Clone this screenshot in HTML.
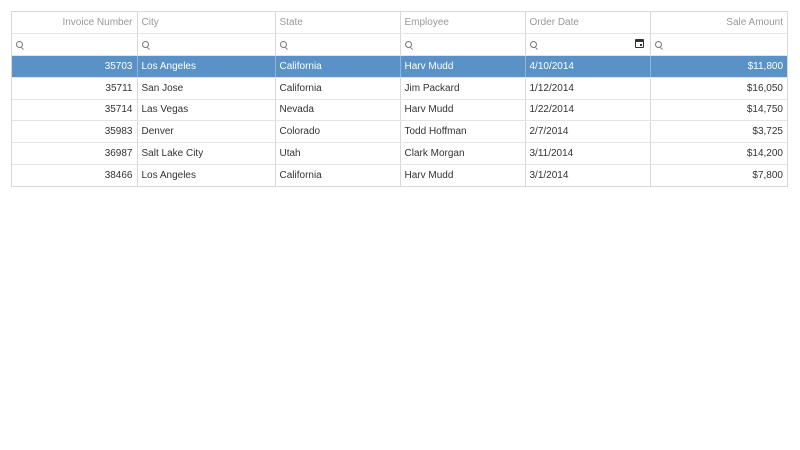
<!DOCTYPE html>
<html><head><style>
body{margin:0;background:#fff;font-family:"Segoe UI","Liberation Sans",sans-serif;font-size:10px;color:#333}
.g{position:absolute;left:11px;top:11px;width:777px;border:1px solid #d8d8d8;box-sizing:border-box}
table{border-collapse:collapse;width:100%;table-layout:fixed}
td{border-left:1px solid #d8d8d8;border-bottom:1px solid #e4e4e4;padding:0 4px;white-space:nowrap;overflow:hidden;height:20.8px}
td:first-child{border-left:none}
tr.h td{color:#999;height:21px}
tr.f td{height:21px;position:relative}
tr:last-child td{border-bottom:none}
.r{text-align:right}
tr.s td{background:#5a91c6;color:#fff;border-left-color:#8fb5db}
.m{display:inline-block;width:5px;height:5px;border:1px solid #777;border-radius:50%;position:relative;vertical-align:middle}
.m:after{content:"";position:absolute;width:3px;height:1px;background:#777;left:4px;top:6px;transform:rotate(45deg)}
.c{position:absolute;right:6px;top:5px;width:9px;height:9px;background:#333;border-radius:1px}
.c:after{content:"";position:absolute;left:1px;top:3px;width:7px;height:5px;background:#fff}
.c:before{content:"";position:absolute;left:5px;top:5px;width:2px;height:2px;background:#333;z-index:1}
</style></head><body>
<div class="g"><table>
<colgroup><col style="width:125px"><col style="width:138px"><col style="width:125px"><col style="width:125px"><col style="width:125px"><col></colgroup>
<tr class="h"><td class="r">Invoice Number</td><td>City</td><td>State</td><td>Employee</td><td>Order Date</td><td class="r">Sale Amount</td></tr>
<tr class="f"><td><span class="m"></span></td><td><span class="m"></span></td><td><span class="m"></span></td><td><span class="m"></span></td><td><span class="m"></span><span class="c"></span></td><td><span class="m"></span></td></tr>
<tr class="s"><td class="r">35703</td><td>Los Angeles</td><td>California</td><td>Harv Mudd</td><td>4/10/2014</td><td class="r">$11,800</td></tr>
<tr><td class="r">35711</td><td>San Jose</td><td>California</td><td>Jim Packard</td><td>1/12/2014</td><td class="r">$16,050</td></tr>
<tr><td class="r">35714</td><td>Las Vegas</td><td>Nevada</td><td>Harv Mudd</td><td>1/22/2014</td><td class="r">$14,750</td></tr>
<tr><td class="r">35983</td><td>Denver</td><td>Colorado</td><td>Todd Hoffman</td><td>2/7/2014</td><td class="r">$3,725</td></tr>
<tr><td class="r">36987</td><td>Salt Lake City</td><td>Utah</td><td>Clark Morgan</td><td>3/11/2014</td><td class="r">$14,200</td></tr>
<tr><td class="r">38466</td><td>Los Angeles</td><td>California</td><td>Harv Mudd</td><td>3/1/2014</td><td class="r">$7,800</td></tr>
</table></div>
</body></html>
